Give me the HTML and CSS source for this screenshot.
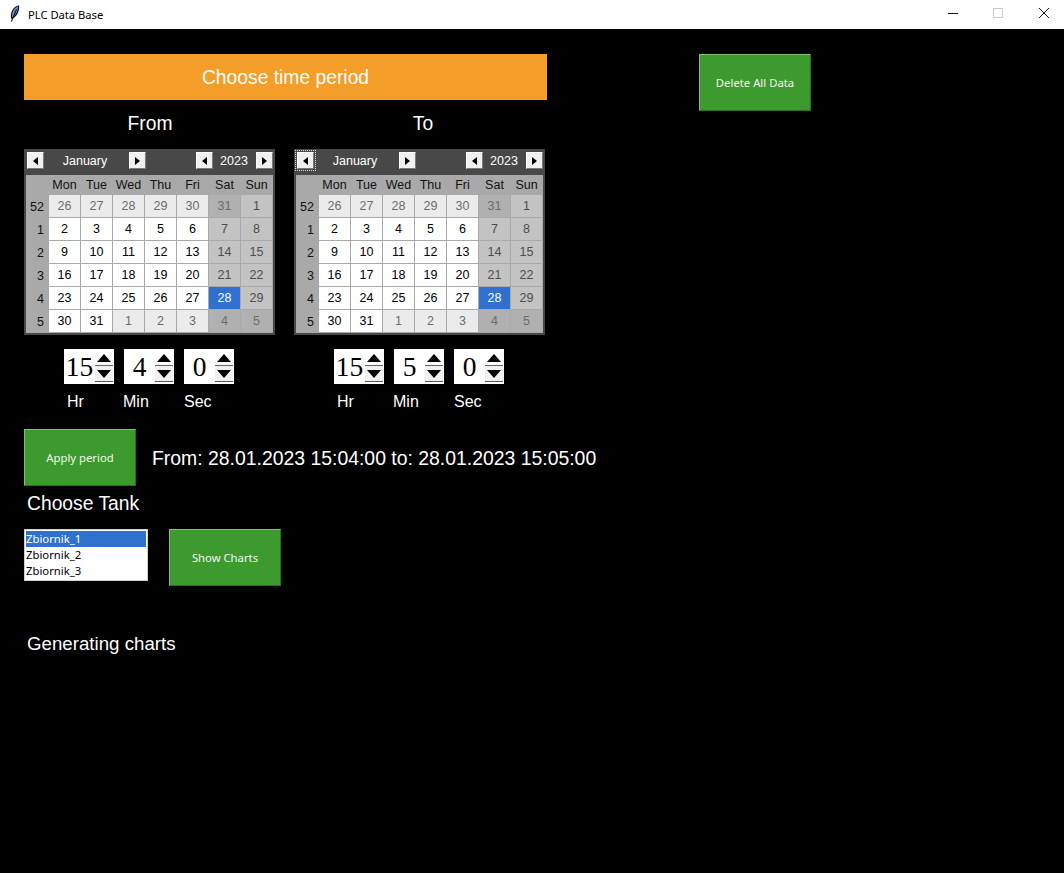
FILE: index.html
```html
<!DOCTYPE html>
<html lang="en">
<head>
<meta charset="utf-8">
<title>PLC Data Base</title>
<link rel="stylesheet" href="styles.css">
</head>
<body>
<header class="titlebar">
  <svg class="feather" width="16" height="20" viewBox="0 0 16 20"><path d="M10.5 1C7.5 1.6 4.6 5 3.6 8.8C3.2 10.6 3.2 12 3.8 13.2C6.5 12 8.8 9.5 9.8 6.5C10.4 4.6 10.7 2.6 10.5 1Z" fill="#6f93cf" stroke="#10131c" stroke-width="1.2"/><path d="M8.5 4.5L3.4 16.5" stroke="#10131c" stroke-width="1.1" fill="none"/></svg>
  <span class="wintitle">PLC Data Base</span>
  <div class="winctl">
    <svg width="46" height="29" viewBox="0 0 46 29"><path d="M21 13.5H31" stroke="#111" stroke-width="1"/></svg>
    <svg width="46" height="29" viewBox="0 0 46 29"><rect x="20.5" y="8.5" width="9" height="9" fill="none" stroke="#ccc"/></svg>
    <svg width="46" height="29" viewBox="0 0 46 29"><path d="M20 8L30 18M30 8L20 18" stroke="#111" stroke-width="1"/></svg>
  </div>
</header>
<main class="app">
  <div class="toprow">
    <div class="banner">Choose time period</div>
    <button class="gbtn delete">Delete All Data</button>
  </div>
  <div class="fromto">
    <div class="ftlabel">From</div>
    <div class="ftlabel">To</div>
  </div>
  <div class="cals">
    <section class="panel">
      <div class="cal">
        <div class="calhead">
          <span class="nav"><i class="tri-l"></i></span><span class="hmonth">January</span><span class="nav"><i class="tri-r"></i></span>
          <span class="nav navy"><i class="tri-l"></i></span><span class="hyear">2023</span><span class="nav"><i class="tri-r"></i></span>
        </div>
        <div class="calgrid">
          <span class="dow"></span><span class="dow">Mon</span><span class="dow">Tue</span><span class="dow">Wed</span><span class="dow">Thu</span><span class="dow">Fri</span><span class="dow">Sat</span><span class="dow">Sun</span>
          <span class="wk">52</span><span class="o">26</span><span class="o">27</span><span class="o">28</span><span class="o">29</span><span class="o">30</span><span class="ow">31</span><span class="we">1</span>
          <span class="wk">1</span><span class="d">2</span><span class="d">3</span><span class="d">4</span><span class="d">5</span><span class="d">6</span><span class="we">7</span><span class="we">8</span>
          <span class="wk">2</span><span class="d">9</span><span class="d">10</span><span class="d">11</span><span class="d">12</span><span class="d">13</span><span class="we">14</span><span class="we">15</span>
          <span class="wk">3</span><span class="d">16</span><span class="d">17</span><span class="d">18</span><span class="d">19</span><span class="d">20</span><span class="we">21</span><span class="we">22</span>
          <span class="wk">4</span><span class="d">23</span><span class="d">24</span><span class="d">25</span><span class="d">26</span><span class="d">27</span><span class="sel">28</span><span class="we">29</span>
          <span class="wk">5</span><span class="d">30</span><span class="d">31</span><span class="o">1</span><span class="o">2</span><span class="o">3</span><span class="ow">4</span><span class="ow">5</span>
        </div>
      </div>
      <div class="spins">
        <div class="spin"><span class="val">15</span><span class="arrows"><b class="up"><i></i></b><b class="dn"><i></i></b></span></div>
        <div class="spin"><span class="val">4</span><span class="arrows"><b class="up"><i></i></b><b class="dn"><i></i></b></span></div>
        <div class="spin"><span class="val">0</span><span class="arrows"><b class="up"><i></i></b><b class="dn"><i></i></b></span></div>
      </div>
      <div class="units"><span class="u1">Hr</span><span class="u2">Min</span><span class="u3">Sec</span></div>
    </section>
    <section class="panel">
      <div class="cal">
        <div class="calhead">
          <span class="nav focus"><i class="tri-l"></i></span><span class="hmonth">January</span><span class="nav"><i class="tri-r"></i></span>
          <span class="nav navy"><i class="tri-l"></i></span><span class="hyear">2023</span><span class="nav"><i class="tri-r"></i></span>
        </div>
        <div class="calgrid">
          <span class="dow"></span><span class="dow">Mon</span><span class="dow">Tue</span><span class="dow">Wed</span><span class="dow">Thu</span><span class="dow">Fri</span><span class="dow">Sat</span><span class="dow">Sun</span>
          <span class="wk">52</span><span class="o">26</span><span class="o">27</span><span class="o">28</span><span class="o">29</span><span class="o">30</span><span class="ow">31</span><span class="we">1</span>
          <span class="wk">1</span><span class="d">2</span><span class="d">3</span><span class="d">4</span><span class="d">5</span><span class="d">6</span><span class="we">7</span><span class="we">8</span>
          <span class="wk">2</span><span class="d">9</span><span class="d">10</span><span class="d">11</span><span class="d">12</span><span class="d">13</span><span class="we">14</span><span class="we">15</span>
          <span class="wk">3</span><span class="d">16</span><span class="d">17</span><span class="d">18</span><span class="d">19</span><span class="d">20</span><span class="we">21</span><span class="we">22</span>
          <span class="wk">4</span><span class="d">23</span><span class="d">24</span><span class="d">25</span><span class="d">26</span><span class="d">27</span><span class="sel">28</span><span class="we">29</span>
          <span class="wk">5</span><span class="d">30</span><span class="d">31</span><span class="o">1</span><span class="o">2</span><span class="o">3</span><span class="ow">4</span><span class="ow">5</span>
        </div>
      </div>
      <div class="spins">
        <div class="spin"><span class="val">15</span><span class="arrows"><b class="up"><i></i></b><b class="dn"><i></i></b></span></div>
        <div class="spin"><span class="val">5</span><span class="arrows"><b class="up"><i></i></b><b class="dn"><i></i></b></span></div>
        <div class="spin"><span class="val">0</span><span class="arrows"><b class="up"><i></i></b><b class="dn"><i></i></b></span></div>
      </div>
      <div class="units"><span class="u1">Hr</span><span class="u2">Min</span><span class="u3">Sec</span></div>
    </section>
  </div>
  <div class="applyrow">
    <button class="gbtn">Apply period</button>
    <div class="status">From: 28.01.2023 15:04:00 to: 28.01.2023 15:05:00</div>
  </div>
  <h2 class="head tank">Choose Tank</h2>
  <div class="tankrow">
    <ul class="list">
      <li class="picked">Zbiornik_1</li>
      <li>Zbiornik_2</li>
      <li>Zbiornik_3</li>
    </ul>
    <button class="gbtn">Show Charts</button>
  </div>
  <h2 class="head gen">Generating charts</h2>
</main>
</body>
</html>
```
FILE: styles.css
```css
* { box-sizing: border-box; }
html, body { margin: 0; height: 100%; }
body { background: #000; color: #fff; font-family: "Liberation Sans", Arial, sans-serif; overflow: hidden; }

.titlebar { height: 29px; background: #fff; display: flex; align-items: center; color: #000; padding-left: 8px; }
.feather { margin-right: 4px; flex: none; }
.wintitle { font: 11.2px/29px "Noto Sans", sans-serif; }
.winctl { margin-left: auto; display: flex; height: 29px; margin-right: -1px; }
.winctl svg { display: block; }

.app { padding: 25px 0 0 24px; }
.toprow { display: flex; align-items: flex-start; height: 46px; }
.banner { width: 523px; height: 46px; background: #f49d29; font-size: 19.3px; line-height: 48px; text-align: center; }
.gbtn { display: block; width: 112px; height: 57px; padding: 0; background: #3c9a2e; color: #f2f7f0; font: 11.3px "Noto Sans", sans-serif;
  border: 1px solid; border-color: #7fc172 #2a6c20 #2a6c20 #7fc172; flex: none; }
.delete { margin-left: 152px; }

.fromto { display: flex; height: 49px; }
.ftlabel { font-size: 19.3px; line-height: 47px; text-align: center; }
.ftlabel:first-child { width: 252px; }
.ftlabel:last-child { width: 294px; }

.cals { display: flex; gap: 19px; }
.panel { width: 251px; }
.cal { width: 251px; height: 186px; background: #484848; padding: 2px; }
.calhead { height: 24px; display: flex; align-items: flex-start; padding-top: 1px; color: #fff; font-size: 12.5px; line-height: 18px; }
.nav { width: 17px; height: 17px; background: #f0f0f0; border: 1px solid; border-color: #fff #7a7a7a #7a7a7a #fff; display: flex; align-items: center; justify-content: center; flex: none; margin-left: 1px; }
.nav.focus { outline: 1px dotted #ddd; outline-offset: 1px; }
.tri-l { border: 4px solid transparent; border-left: 0; border-right: 5px solid #000; }
.tri-r { border: 4px solid transparent; border-right: 0; border-left: 5px solid #000; }
.hmonth { width: 84px; text-align: center; margin-left: -1px; margin-right: 1px; }
.navy { margin-left: 50px; }
.hyear { width: 42px; text-align: center; }

.calgrid { display: grid; grid-template-columns: 22px repeat(7, 31px); grid-template-rows: 19px repeat(6, 22px); gap: 1px; background: #a9a9a9; height: 158px; width: 247px; font-size: 12.5px; text-align: center; line-height: 22px; }
.dow { color: #111; line-height: 21px; }
.wk { color: #111; line-height: 24px; text-align: right; padding-right: 5px; margin-right: -1px; }
.d { background: #fff; color: #000; }
.o { background: #ebebeb; color: #6d6d6d; }
.we { background: #c3c3c3; color: #4d4d4d; }
.ow { background: #b0b0b0; color: #6d6d6d; }
.sel { background: #3071d0; color: #fff; }

.spins { display: flex; gap: 10px; padding: 14px 0 0 40px; }
.spin { width: 50px; height: 35px; background: #fff; display: flex; color: #000; padding: 1px 1px 2px 0; }
.val { width: 31px; font: 27.5px/34px "Liberation Serif", serif; text-align: center; flex: none; }
.arrows { width: 18px; display: flex; flex-direction: column; background: #f0f0f0; border-bottom: 1px solid #555; }
.arrows b { flex: 1; display: flex; align-items: center; justify-content: center; font-weight: normal; }
.up { background: #fff; border-bottom: 1px solid #666; }
.up i { border: 7px solid transparent; border-top: 0; border-bottom: 8px solid #000; }
.dn i { border: 7px solid transparent; border-bottom: 0; border-top: 8px solid #000; }

.units { display: flex; font-size: 16px; height: 45px; padding-top: 9px; line-height: 18px; }
.u1 { margin-left: 43px; width: 56px; }
.u2 { width: 61px; }

.applyrow { display: flex; align-items: center; }
.status { font-size: 19.4px; margin-left: 16px; white-space: nowrap; padding-top: 2px; }
.head { margin: 0; font-weight: normal; font-size: 19.3px; line-height: 22px; padding-left: 3px; }
.tank { margin-top: 7px; }
.tankrow { display: flex; align-items: flex-start; margin-top: 14px; gap: 21px; }
.list { list-style: none; margin: 0; padding: 1px; width: 124px; height: 52px; background: #fff; border: 1px solid #d0d0d0; color: #000; font: 11.3px/16px "Noto Sans", sans-serif; }
.picked { background: #3071d0; color: #fff; }
.gen { margin-top: 47px; font-size: 18.7px; }
```
